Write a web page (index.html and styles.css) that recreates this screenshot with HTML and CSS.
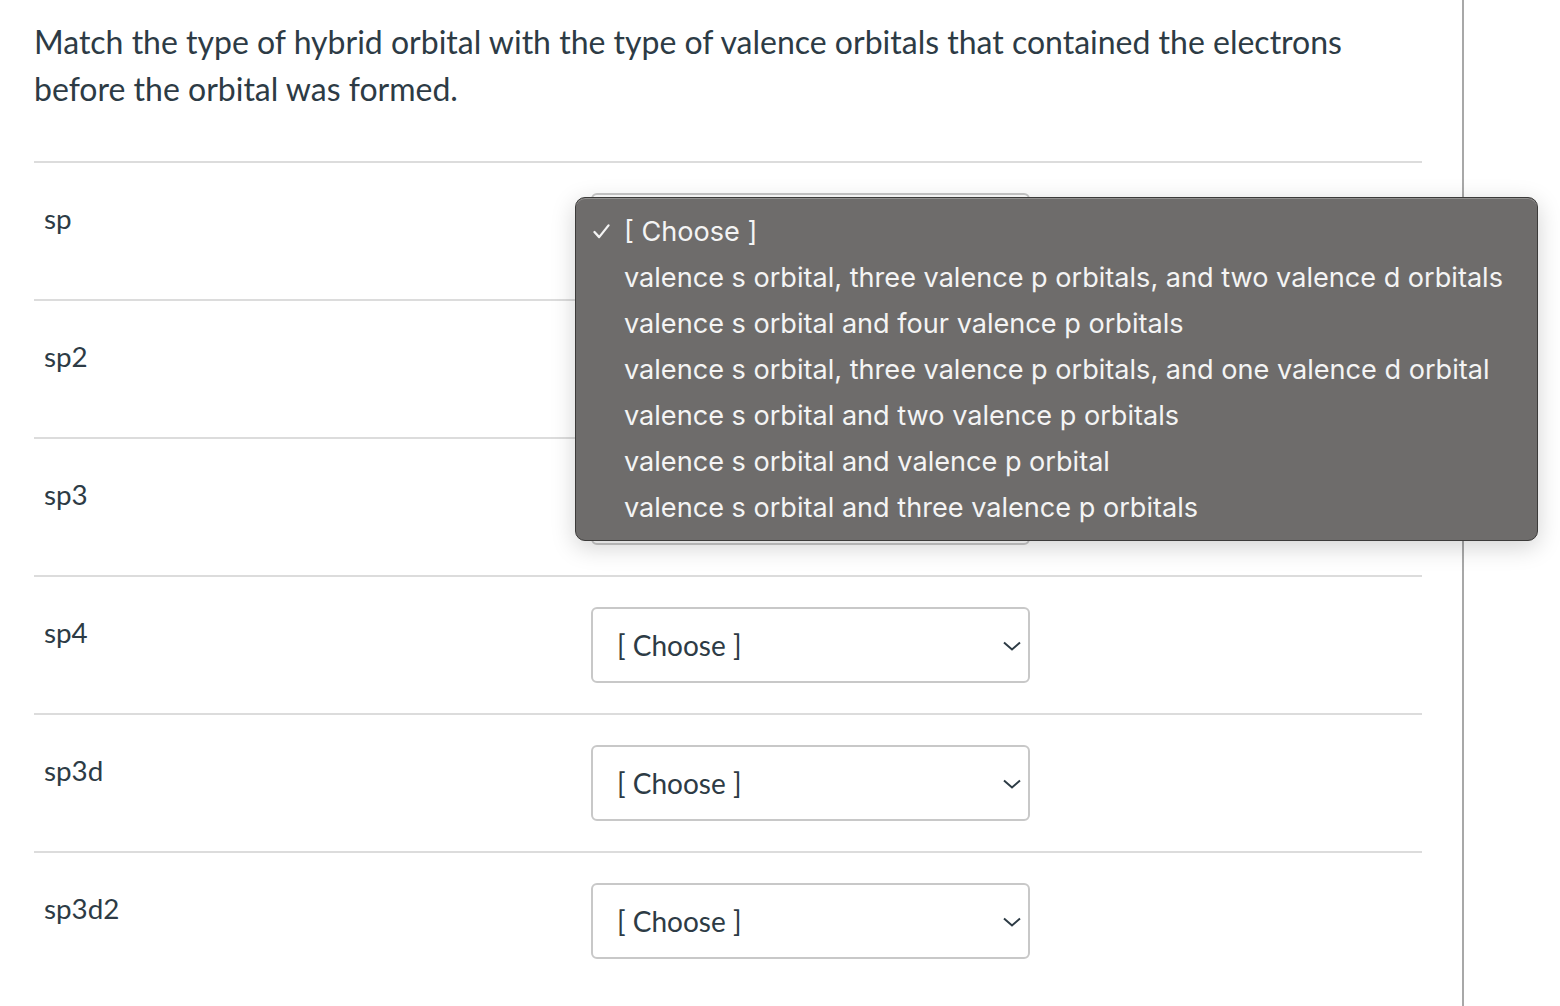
FILE: index.html
```html
<!DOCTYPE html>
<html lang="en">
<head>
    <meta charset="UTF-8">
    <meta name="viewport" content="width=device-width, initial-scale=1.0">
    <title>Matching question</title>
    <link rel="stylesheet" href="styles.css">
</head>

<body>
    <div class="page">
        <div class="question">
            <p class="question-text">Match the type of hybrid orbital with the type of valence orbitals that contained the electrons before the orbital was formed.</p>

            <div class="answers">
                <div class="answer">
                    <div class="answer-label">sp</div>
                    <div class="select"><span>[ Choose ]</span><svg class="chevron" viewBox="0 0 18 10"><path d="M1 1.5 L9 8.5 L17 1.5"/></svg></div>
                </div>
                <div class="answer">
                    <div class="answer-label">sp2</div>
                    <div class="select"><span>[ Choose ]</span><svg class="chevron" viewBox="0 0 18 10"><path d="M1 1.5 L9 8.5 L17 1.5"/></svg></div>
                </div>
                <div class="answer">
                    <div class="answer-label">sp3</div>
                    <div class="select"><span>[ Choose ]</span><svg class="chevron" viewBox="0 0 18 10"><path d="M1 1.5 L9 8.5 L17 1.5"/></svg></div>
                </div>
                <div class="answer">
                    <div class="answer-label">sp4</div>
                    <div class="select"><span>[ Choose ]</span><svg class="chevron" viewBox="0 0 18 10"><path d="M1 1.5 L9 8.5 L17 1.5"/></svg></div>
                </div>
                <div class="answer">
                    <div class="answer-label">sp3d</div>
                    <div class="select"><span>[ Choose ]</span><svg class="chevron" viewBox="0 0 18 10"><path d="M1 1.5 L9 8.5 L17 1.5"/></svg></div>
                </div>
                <div class="answer">
                    <div class="answer-label">sp3d2</div>
                    <div class="select"><span>[ Choose ]</span><svg class="chevron" viewBox="0 0 18 10"><path d="M1 1.5 L9 8.5 L17 1.5"/></svg></div>
                </div>
            </div>
        </div>
    </div>

    <!-- geöffnete Auswahlliste der ersten Zeile -->
    <ul class="dropdown">
        <li class="selected"><svg class="check" viewBox="0 0 18 16"><path d="M1.5 8.5 L6.5 14 L16.5 1.5"/></svg>[ Choose ]</li>
        <li>valence s orbital, three valence p orbitals, and two valence d orbitals</li>
        <li>valence s orbital and four valence p orbitals</li>
        <li>valence s orbital, three valence p orbitals, and one valence d orbital</li>
        <li>valence s orbital and two valence p orbitals</li>
        <li>valence s orbital and valence p orbital</li>
        <li>valence s orbital and three valence p orbitals</li>
    </ul>
</body>
</html>
```

FILE: styles.css
```css
* {
    margin: 0;
    padding: 0;
    box-sizing: border-box;
}

body {
    background: #fff;
    font-family: Lato, "Noto Sans", sans-serif;
    color: #2d3b45;
    overflow: hidden;
}

.page {
    width: 1464px;
    min-height: 1006px;
    border-right: 2px solid #a8a8a8;
    padding: 0 40px 0 34px;
}

.question-text {
    font-size: 32px;
    line-height: 47px;
    padding-top: 18px;
    padding-bottom: 49px;
}

.answer {
    display: flex;
    align-items: flex-start;
    border-top: 2px solid #dcdcdc;
    padding: 30px 0;
}

.answer-label {
    width: 557px;
    padding-left: 10px;
    padding-top: 6px;
    font-size: 27.8px;
    line-height: 40px;
}

.select {
    width: 439px;
    height: 76px;
    border: 2px solid #c8c8c8;
    border-radius: 6px;
    display: flex;
    align-items: center;
    justify-content: space-between;
    padding: 0 7px 0 24px;
    font-size: 28px;
    background: #fff;
}

.chevron {
    width: 18px;
    height: 10px;
    fill: none;
    stroke: #2d3b45;
    stroke-width: 2;
    margin-top: 2px;
}

.dropdown {
    position: absolute;
    left: 575px;
    top: 197px;
    width: 963px;
    height: 344px;
    list-style: none;
    background: #6e6c6b;
    border: 1px solid #3c3b3a;
    border-radius: 10px;
    box-shadow: inset 0 1px 0 rgba(255, 255, 255, 0.25), 0 6px 24px rgba(0, 0, 0, 0.18);
    padding: 11px 0 0 48px;
    font-family: Inter, "Noto Sans", sans-serif;
    font-size: 27.1px;
    color: #f4f4f4;
}

.dropdown li {
    position: relative;
    height: 46px;
    line-height: 46px;
}

.check {
    position: absolute;
    left: -31px;
    top: 15px;
    width: 17px;
    height: 15px;
    fill: none;
    stroke: #f4f4f4;
    stroke-width: 2.4;
    stroke-linecap: round;
    stroke-linejoin: round;
}
```
